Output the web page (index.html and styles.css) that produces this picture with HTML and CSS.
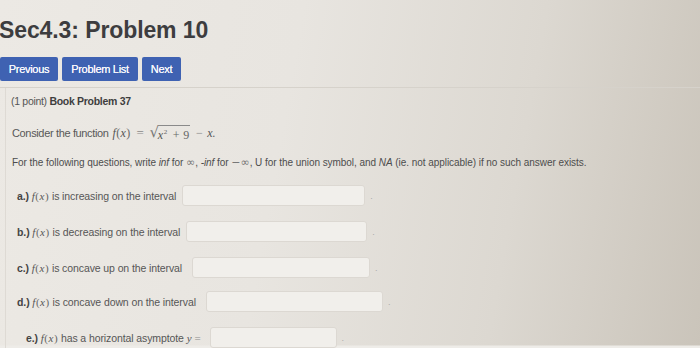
FILE: index.html
```html
<!DOCTYPE html>
<html>
<head>
<meta charset="utf-8">
<link rel="stylesheet" href="styles.css">
</head>
<body>
<div class="page">
  <h1 class="title">Sec4.3: Problem 10</h1>
  <div class="nav">
    <span class="btn btn-prev">Previous</span>
    <span class="btn btn-list">Problem List</span>
    <span class="btn btn-next">Next</span>
  </div>
  <div class="rule"></div>
  <div class="panel">
    <p class="points">(1 point) <b>Book Problem 37</b></p>
    <p class="consider">Consider the function <span class="fx"><span class="m">f</span><span class="mr">(</span><span class="m">x</span><span class="mr">)</span></span><span class="mr op eq">=</span><span class="sqrt"><span class="rad">√</span><span class="under"><span class="m">x</span><sup class="mr">2</sup><span class="mr plus">+</span><span class="mr">9</span></span></span><span class="mr minus">−</span><span class="m">x</span><span class="mr">.</span></p>
    <p class="note">For the following questions, write <i>inf</i> for <span class="mr inf">∞</span>, <i>-inf</i> for <span class="mr inf">−∞</span>, U for the union symbol, and <i>NA</i> (ie. not applicable) if no such answer exists.</p>
    <div class="q q-a"><span class="lbl"><b>a.)</b> <span class="fx"><span class="m">f</span><span class="mr">(</span><span class="m">x</span><span class="mr">)</span></span> is increasing on the interval</span><span class="inp w-a"></span><span class="dot">.</span></div>
    <div class="q q-b"><span class="lbl"><b>b.)</b> <span class="fx"><span class="m">f</span><span class="mr">(</span><span class="m">x</span><span class="mr">)</span></span> is decreasing on the interval</span><span class="inp w-b"></span><span class="dot">.</span></div>
    <div class="q q-c"><span class="lbl"><b>c.)</b> <span class="fx"><span class="m">f</span><span class="mr">(</span><span class="m">x</span><span class="mr">)</span></span> is concave up on the interval</span><span class="inp w-c"></span><span class="dot">.</span></div>
    <div class="q q-d"><span class="lbl"><b>d.)</b> <span class="fx"><span class="m">f</span><span class="mr">(</span><span class="m">x</span><span class="mr">)</span></span> is concave down on the interval</span><span class="inp w-d"></span><span class="dot">.</span></div>
    <div class="q q-e"><span class="lbl"><b>e.)</b> <span class="fx"><span class="m">f</span><span class="mr">(</span><span class="m">x</span><span class="mr">)</span></span> has a horizontal asymptote <span class="m">y</span><span class="mr op eq">=</span></span><span class="inp w-e"></span><span class="dot">.</span></div>
  </div>
</div>
</body>
</html>
```

FILE: styles.css
```css
html, body {
  margin: 0;
  padding: 0;
}
body {
  width: 700px;
  height: 348px;
  overflow: hidden;
  background:
    linear-gradient(to bottom, rgba(255,255,255,0) 345px, #eeece8 346px),
    linear-gradient(100deg, #ece9e4 0%, #e8e5e0 40%, #dcd8d1 72%, #cac4ba 100%);
  font-family: "Liberation Sans", Arial, sans-serif;
  color: #4a4a4a;
}
.page {
  padding-top: 16px;
}
.title {
  margin: 0 0 0 -1px;
  font-size: 23px;
  font-weight: bold;
  color: #3d3d3f;
  line-height: 28px;
  letter-spacing: -0.1px;
}
.nav {
  display: flex;
  gap: 4px;
  margin-top: 13px;
}
.btn {
  display: flex;
  align-items: center;
  justify-content: center;
  height: 24px;
  background: #3f62b2;
  color: #f6f7fb;
  font-size: 11px;
  border-radius: 2px;
  letter-spacing: -0.3px;
  text-shadow: 0 0 0.4px #fff;
}
.btn-prev { width: 58px; }
.btn-list { width: 76px; }
.btn-next { width: 39px; }
.rule {
  margin-top: 6px;
  height: 1px;
  background: #d6d2cb;
}
.panel {
  margin-left: 5px;
  border-left: 1px solid #dedad4;
  padding-left: 5px;
  padding-top: 6px;
}
p { margin: 0; }
.points {
  font-size: 10.5px;
  line-height: 14px;
  color: #555;
  letter-spacing: -0.3px;
}
.points b { color: #3e3e3e; }
.consider {
  margin-top: 16px;
  margin-left: 1px;
  font-size: 11px;
  line-height: 16px;
  color: #585858;
  letter-spacing: -0.35px;
  white-space: nowrap;
  display: flex;
  align-items: baseline;
}
.consider .fx { margin-left: 4px; }
.fx { letter-spacing: 0.3px; }
.m {
  font-family: "Liberation Serif", "DejaVu Serif", serif;
  font-style: italic;
  font-size: 12px;
  color: #555;
}
.mr {
  font-family: "Liberation Serif", serif;
  font-size: 12px;
  color: #666;
}
.op { color: #8a8a8a; }
.eq { margin: 0 6px; font-size: 13px; }
.sqrt { display: inline-flex; align-items: flex-end; }
.rad { font-family: "DejaVu Sans", sans-serif; font-size: 15px; color: #777; line-height: 17px; }
.under { border-top: 1px solid #8a8a8a; padding-top: 3px; line-height: 12px; margin-left: -1px; padding-right: 1px; }
.plus { margin: 0 4px 0 6px; }
.minus { margin: 0 5px 0 6px; color: #888; }
.under sup { font-size: 7px; vertical-align: 5px; line-height: 0; margin-left: 1px; }
.note {
  margin-top: 15px;
  margin-left: 1px;
  font-size: 10px;
  line-height: 14px;
  color: #4d4d4d;
  letter-spacing: -0.05px;
  white-space: nowrap;
}
.note i { font-style: italic; }
.inf { font-family: "DejaVu Sans", sans-serif; font-size: 11px; color: #777; }
.q {
  display: flex;
  align-items: center;
  height: 21px;
  font-size: 10.5px;
  color: #565656;
  letter-spacing: -0.1px;
}
.q b { color: #444; }
.q .fx { letter-spacing: 0.5px; }
.q .m, .q .mr { font-size: 11px; }
.q .eq { margin: 0 3px; font-size: 11px; }
.q-a { margin-top: 15px; margin-left: 6px; }
.q-b { margin-top: 15px; margin-left: 6px; }
.q-c { margin-top: 15px; margin-left: 6px; }
.q-d { margin-top: 13px; margin-left: 6px; }
.q-e { margin-top: 15px; margin-left: 15px; }
.lbl { white-space: nowrap; }
.inp {
  height: 19px;
  margin-left: 6px;
  border: 1px solid #dcd8d2;
  border-radius: 3px;
  background: #f1efeb;
}
.w-a { width: 181px; }
.w-b { width: 179px; }
.w-c { width: 176px; margin-left: 10px; }
.w-d { width: 175px; margin-left: 10px; }
.w-e { width: 125px; }
.dot { margin-left: 5px; color: #aaa; font-size: 9px; }
```
